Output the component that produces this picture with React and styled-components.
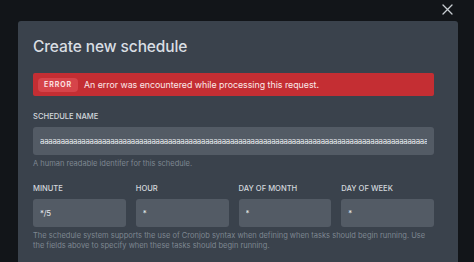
import React from "react";
import styled, { createGlobalStyle } from "styled-components";

const Global = createGlobalStyle`
  html, body { margin: 0; padding: 0; background: #121519; overflow: hidden; }
  * { box-sizing: border-box; }
  body { font-family: Inter, "Noto Sans", "Liberation Sans", sans-serif; }
`;

const Page = styled.div`
  position: relative;
  width: 474px;
  height: 262px;
  overflow: hidden;
  padding: 21px 16px 0 18px;
`;

const CloseButton = styled.button`
  position: absolute;
  top: 3px;
  right: 21px;
  width: 12px;
  height: 12px;
  padding: 0;
  border: 0;
  background: transparent;
  display: flex;
  align-items: center;
  justify-content: center;
  color: #c8cdd2;
`;

const Modal = styled.div`
  width: 440px;
  height: 260px;
  background: #3a424c;
  border-radius: 3px;
  padding: 16px 24px 0 15px;
  display: flex;
  flex-direction: column;
`;

const Title = styled.h2`
  margin: 0;
  font-size: 15.5px;
  line-height: 20px;
  font-weight: 500;
  color: #d9dee3;
  letter-spacing: -0.1px;
`;

const ErrorBar = styled.div`
  margin-top: 16px;
  height: 23px;
  background: #c42e33;
  border-radius: 2px;
  display: flex;
  align-items: center;
  padding: 0 5px;
  gap: 6px;
`;

const Badge = styled.span`
  background: #d6444a;
  color: #fbe0e0;
  font-size: 7px;
  font-weight: 700;
  letter-spacing: 0.9px;
  padding: 0 6px;
  height: 14px;
  line-height: 14px;
  border-radius: 4px;
`;

const ErrorText = styled.span`
  color: #fbe9e9;
  font-size: 8.8px;
  font-weight: 400;
`;

const Field = styled.div`
  display: flex;
  flex-direction: column;
  margin-top: ${(p) => p.$mt || 0}px;
`;

const Label = styled.label`
  font-size: 7.6px;
  font-weight: 500;
  text-transform: uppercase;
  color: #d3d8dd;
  line-height: 10px;
  margin-bottom: 5px;
`;

const Input = styled.input`
  width: 100%;
  height: 28px;
  border: 0;
  border-radius: 3px;
  background: #535b65;
  color: #e8ecef;
  padding: 0 7px;
  font-family: Inter, "Noto Sans", sans-serif;
  font-size: 7.8px;
  letter-spacing: -0.25px;
  outline: none;
`;

const Help = styled.p`
  margin: ${(p) => p.$mt || 3}px 0 0;
  font-size: 7.5px;
  line-height: 10px;
  color: #7e8791;
`;

const Grid = styled.div`
  display: grid;
  grid-template-columns: repeat(4, 1fr);
  gap: 10px;
  margin-top: 15px;
`;

const XIcon = () => (
  <svg width="11" height="11" viewBox="0 0 11 11" fill="none" stroke="currentColor" strokeWidth="1.3" strokeLinecap="round">
    <path d="M1 1L10 10M10 1L1 10" />
  </svg>
);

const cron = [
  { label: "Minute", value: "*/5" },
  { label: "Hour", value: "*" },
  { label: "Day of month", value: "*" },
  { label: "Day of week", value: "*" },
];

export default function App() {
  return (
    <Page>
      <Global />
      <CloseButton aria-label="Close">
        <XIcon />
      </CloseButton>
      <Modal>
        <Title>Create new schedule</Title>
        <ErrorBar>
          <Badge>ERROR</Badge>
          <ErrorText>An error was encountered while processing this request.</ErrorText>
        </ErrorBar>
        <Field $mt={16}>
          <Label>Schedule name</Label>
          <Input readOnly value={"a".repeat(120)} />
          <Help $mt={4}>A human readable identifer for this schedule.</Help>
        </Field>
        <Grid>
          {cron.map((c) => (
            <Field key={c.label}>
              <Label>{c.label}</Label>
              <Input readOnly value={c.value} />
            </Field>
          ))}
        </Grid>
        <Help $mt={4}>
          The schedule system supports the use of Cronjob syntax when defining when tasks should begin running. Use
          the fields above to specify when these tasks should begin running.
        </Help>
      </Modal>
    </Page>
  );
}
